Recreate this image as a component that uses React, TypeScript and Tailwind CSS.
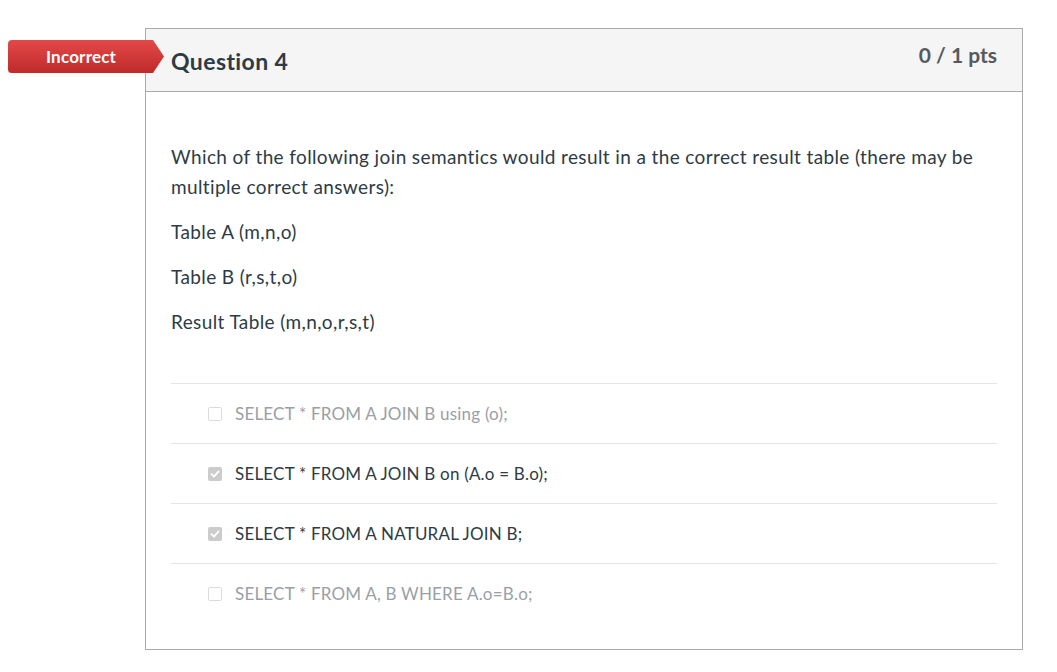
import React from "react";

const answers = [
  { text: "SELECT * FROM A JOIN B using (o);", checked: false },
  { text: "SELECT * FROM A JOIN B on (A.o = B.o);", checked: true },
  { text: "SELECT * FROM A NATURAL JOIN B;", checked: true },
  { text: "SELECT * FROM A, B WHERE A.o=B.o;", checked: false },
];

function Check({ checked }: { checked: boolean }) {
  if (checked) {
    return (
      <div className="w-[14px] h-[14px] rounded-[2px] bg-[#cccccc] flex items-center justify-center shrink-0">
        <svg width="10" height="10" viewBox="0 0 10 10">
          <path d="M1.5 5.2 L4 7.6 L8.6 2.4" stroke="#ffffff" strokeWidth="1.8" fill="none" strokeLinecap="round" strokeLinejoin="round" />
        </svg>
      </div>
    );
  }
  return <div className="w-[14px] h-[14px] rounded-[2px] border border-[#dcdcdc] bg-white shrink-0" />;
}

export default function App() {
  return (
    <div className="min-h-[672px] bg-white pt-[28px] pl-[145px]" style={{ fontFamily: "Lato, 'Open Sans', sans-serif" }}>
      <div className="relative w-[878px] border border-[#aaaaaa]">
        <div className="absolute left-[-138px] top-[11px] h-[33px] w-[156px] rounded-l-[4px] bg-gradient-to-b from-[#e44848] to-[#bf2a2a] text-white font-bold text-[17px] tracking-[0.2px] flex items-center pl-[38px] shadow-[0_1px_1px_rgba(0,0,0,0.25)] [clip-path:polygon(0_0,calc(100%-11px)_0,100%_50%,calc(100%-11px)_100%,0_100%)]">
          Incorrect
        </div>
        <div className="h-[63px] bg-[#f5f5f5] border-b border-[#aaaaaa] flex justify-between items-start px-[25px]">
          <div className="mt-[18px] text-[23px] leading-[28px] font-bold tracking-[0.4px] text-[#2d3b45]">Question 4</div>
          <div className="mt-[13px] text-[21px] leading-[25px] font-bold text-[#555a5e]">0 / 1 pts</div>
        </div>
        <div className="px-[25px] pt-[50px] pb-[26px] text-[#2d3b45] text-[19px] leading-[30px] tracking-[0.38px]">
          <p className="mb-[15px]">
            Which of the following join semantics would result in a the correct result table (there may be multiple correct answers):
          </p>
          <p className="mb-[15px]">Table A (m,n,o)</p>
          <p className="mb-[15px]">Table B (r,s,t,o)</p>
          <p>Result Table (m,n,o,r,s,t)</p>
          <div className="mt-[46px]">
            {answers.map((a, i) => (
              <div key={i} className="h-[60px] border-t border-[#e5e5e5] flex items-center pl-[37px] gap-[13px]">
                <Check checked={a.checked} />
                <span className={`text-[17px] tracking-[0.2px] ${a.checked ? "text-[#2d3b45]" : "text-[#9aa0a5]"}`}>{a.text}</span>
              </div>
            ))}
          </div>
        </div>
      </div>
    </div>
  );
}
